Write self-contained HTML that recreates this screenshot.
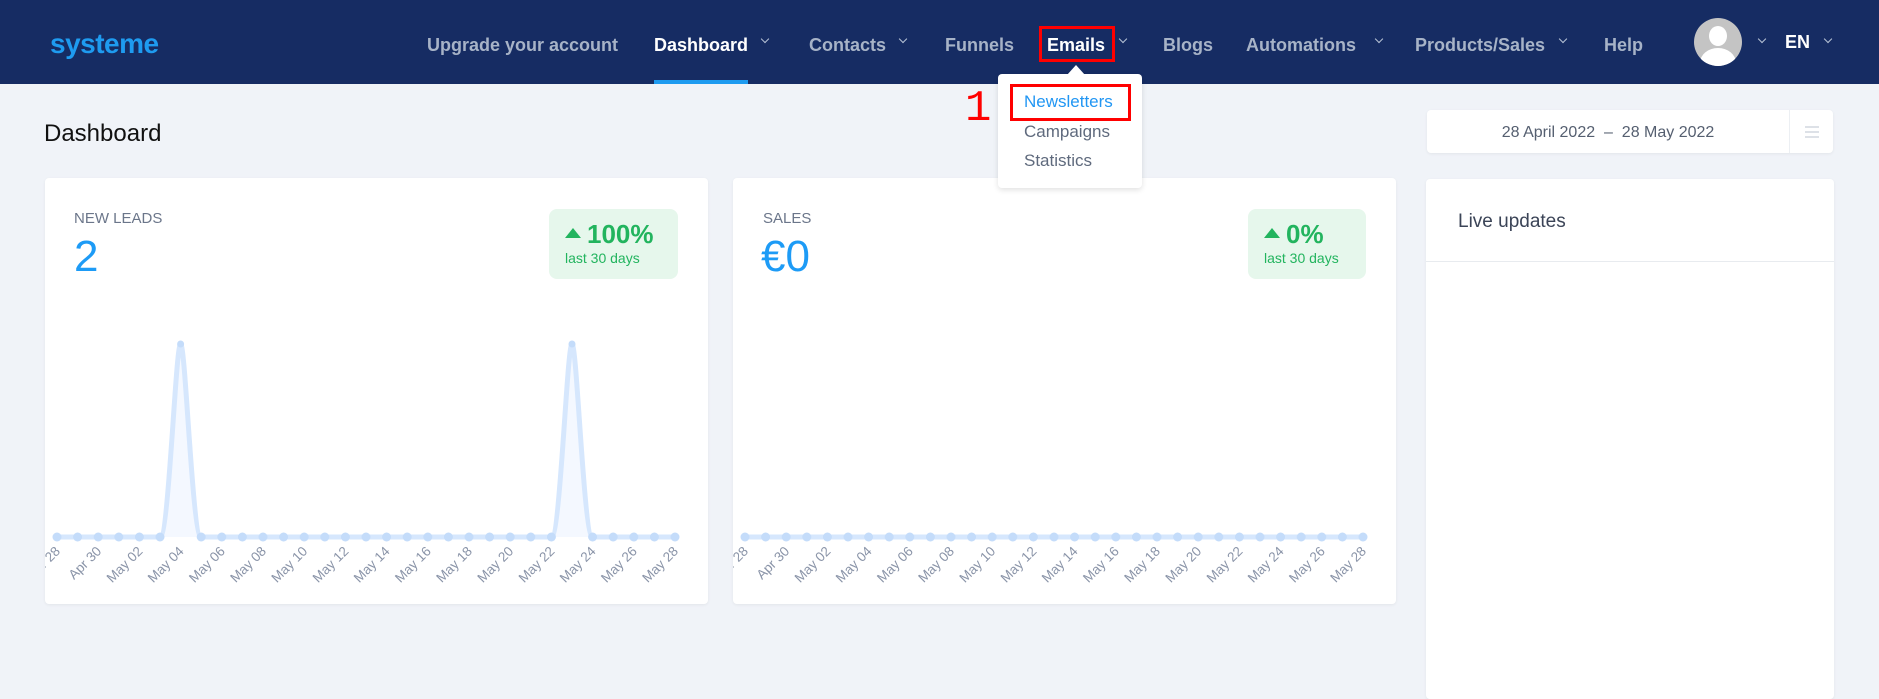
<!DOCTYPE html>
<html><head><meta charset="utf-8">
<style>
*{margin:0;padding:0;box-sizing:border-box}
body{width:1879px;height:680px;overflow:hidden;background:#f0f3f8;font-family:"Liberation Sans",sans-serif;position:relative}
.hdr{position:absolute;left:0;top:0;width:1879px;height:84px;background:#162c63}
.logo{position:absolute;left:50px;top:28px;color:#1e9bf0;font-weight:bold;font-size:28px;letter-spacing:-0.5px}
.nav{position:absolute;top:35px;font-size:18px;color:#a7b3c7;font-weight:bold;white-space:nowrap}
.chev{position:absolute;top:36px;width:6px;height:6px;border-right:1.6px solid #b8c3d6;border-bottom:1.6px solid #b8c3d6;transform:rotate(45deg)}
.card{position:absolute;background:#fff;border-radius:4px;box-shadow:0 1px 3px rgba(0,0,0,.06)}
.lbl{position:absolute;font-size:15px;color:#6b768a}
.big{position:absolute;font-size:44px;color:#1d9bf6}
.badge{position:absolute;background:#e6f7ec;border-radius:8px;color:#22b45e}
</style></head><body>
<div class="hdr"></div>
<div class="logo">systeme</div>
<div class="nav" style="left:427px">Upgrade your account</div>
<div class="nav" style="left:654px;color:#fff">Dashboard</div><div class="chev" style="left:762px"></div>
<div style="position:absolute;left:654px;top:80px;width:94px;height:4px;background:#1e9bf0"></div>
<div class="nav" style="left:809px">Contacts</div><div class="chev" style="left:900px"></div>
<div class="nav" style="left:945px">Funnels</div>
<div class="nav" style="left:1047px;color:#fff">Emails</div><div class="chev" style="left:1120px"></div>
<div style="position:absolute;left:1039px;top:26px;width:76px;height:36px;border:3px solid #f00"></div>
<div class="nav" style="left:1163px">Blogs</div>
<div class="nav" style="left:1246px">Automations</div><div class="chev" style="left:1376px"></div>
<div class="nav" style="left:1415px">Products/Sales</div><div class="chev" style="left:1560px"></div>
<div class="nav" style="left:1604px">Help</div>
<div style="position:absolute;left:1694px;top:18px;width:48px;height:48px;border-radius:50%;background:#c4c4c4;overflow:hidden">
<div style="position:absolute;left:15px;top:8px;width:18px;height:20px;border-radius:50%;background:#fff"></div>
<div style="position:absolute;left:6px;top:30px;width:36px;height:30px;border-radius:50% 50% 0 0;background:#fff"></div></div>
<div class="chev" style="left:1759px;top:36px"></div>
<div class="nav" style="left:1785px;color:#fff;top:32px">EN</div><div class="chev" style="left:1825px;top:36px"></div>

<div style="position:absolute;left:44px;top:120px;font-size:24px;color:#111">Dashboard</div>
<div style="position:absolute;left:965px;top:84px;font-size:44px;color:#f00;font-family:'Liberation Mono',monospace">1</div>

<div class="card" style="left:1427px;top:110px;width:406px;height:43px">
<div style="position:absolute;left:0;width:362px;top:14px;text-align:center;font-size:16px;color:#555f70">28 April 2022 &nbsp;–&nbsp; 28 May 2022</div>
<div style="position:absolute;left:362px;top:0;width:1px;height:43px;background:#eceff3"></div>
<div style="position:absolute;left:378px;top:16px;width:14px;height:2px;background:#dde1e7;box-shadow:0 5px 0 #dde1e7,0 10px 0 #dde1e7"></div>
</div>

<div class="card" style="left:45px;top:178px;width:663px;height:426px">
<div class="lbl" style="left:29px;top:32px">NEW LEADS</div>
<div class="big" style="left:29px;top:54px">2</div>
<div class="badge" style="left:504px;top:31px;width:129px;height:70px">
<div style="position:absolute;left:16px;top:19px;width:0;height:0;border-left:8px solid transparent;border-right:8px solid transparent;border-bottom:10px solid #22b45e"></div>
<div style="position:absolute;left:38px;top:10px;font-size:26px;font-weight:bold">100%</div>
<div style="position:absolute;left:16px;top:41px;font-size:14px">last 30 days</div></div>
<svg id="c1" width="663" height="426" style="position:absolute;left:0;top:0"></svg>
</div>

<div class="card" style="left:733px;top:178px;width:663px;height:426px">
<div class="lbl" style="left:30px;top:32px">SALES</div>
<div class="big" style="left:28px;top:54px">€0</div>
<div class="badge" style="left:515px;top:31px;width:118px;height:70px">
<div style="position:absolute;left:16px;top:19px;width:0;height:0;border-left:8px solid transparent;border-right:8px solid transparent;border-bottom:10px solid #22b45e"></div>
<div style="position:absolute;left:38px;top:10px;font-size:26px;font-weight:bold">0%</div>
<div style="position:absolute;left:16px;top:41px;font-size:14px">last 30 days</div></div>
<svg id="c2" width="663" height="426" style="position:absolute;left:0;top:0"></svg>
</div>

<div class="card" style="left:1426px;top:179px;width:408px;height:520px">
<div style="position:absolute;left:32px;top:32px;font-size:19px;color:#3b4457">Live updates</div>
<div style="position:absolute;left:0;top:82px;width:408px;height:1px;background:#e8ebef"></div>
</div>

<div style="position:absolute;left:998px;top:74px;width:144px;height:114px;background:#fff;border-radius:4px;box-shadow:0 2px 6px rgba(0,0,0,.12)"></div>
<div style="position:absolute;left:1067px;top:65px;width:0;height:0;border-left:9px solid transparent;border-right:9px solid transparent;border-bottom:10px solid #fff"></div>
<div style="position:absolute;left:1024px;top:92px;font-size:17px;color:#2196f3">Newsletters</div>
<div style="position:absolute;left:1010px;top:84px;width:121px;height:37px;border:3px solid #f00"></div>
<div style="position:absolute;left:1024px;top:122px;font-size:17px;color:#5f6a7d">Campaigns</div>
<div style="position:absolute;left:1024px;top:151px;font-size:17px;color:#5f6a7d">Statistics</div>

<script>
function chart(id,peaks){
 var s=document.getElementById(id),x0=12,dx=20.6,B=359,P=166,h='';
 var X=function(i){return x0+i*dx};
 var d='M'+X(0)+' '+B,f='';
 for(var i=1;i<31;i++){
  if(peaks.indexOf(i)>=0){d+=' C'+(X(i-1)+9)+' '+B+' '+(X(i)-5)+' '+P+' '+X(i)+' '+P;
   f+='<path d="M'+X(i-1)+' '+B+' C'+(X(i-1)+9)+' '+B+' '+(X(i)-5)+' '+P+' '+X(i)+' '+P+' C'+(X(i)+5)+' '+P+' '+(X(i+1)-9)+' '+B+' '+X(i+1)+' '+B+'Z" fill="#f4f8ff"/>';}
  else if(peaks.indexOf(i-1)>=0){d+=' C'+(X(i-1)+5)+' '+P+' '+(X(i)-9)+' '+B+' '+X(i)+' '+B;}
  else d+=' L'+X(i)+' '+B;
 }
 h+=f+'<path d="'+d+'" fill="none" stroke="#d6e7fd" stroke-width="5" stroke-linejoin="round"/>';
 for(var i=0;i<31;i++){if(peaks.indexOf(i)<0)h+='<circle cx="'+X(i)+'" cy="'+B+'" r="4.5" fill="#c4dcfa"/>';else h+='<circle cx="'+X(i)+'" cy="'+P+'" r="3.5" fill="#c4dcfa"/>';}
 var labs=['Apr 28','Apr 30','May 02','May 04','May 06','May 08','May 10','May 12','May 14','May 16','May 18','May 20','May 22','May 24','May 26','May 28'];
 for(var k=0;k<16;k++){var x=X(k*2)+4,y=374;h+='<text x="'+x+'" y="'+y+'" font-size="13.5" fill="#8a94a8" text-anchor="end" transform="rotate(-45 '+x+' '+y+')" font-family="Liberation Sans,sans-serif">'+labs[k]+'</text>';}
 s.innerHTML='<defs><clipPath id="cp'+id+'"><rect x="0" y="0" width="663" height="426"/></clipPath></defs><g clip-path="url(#cp'+id+')">'+h+'</g>';
}
chart('c1',[6,25]);chart('c2',[]);
</script>
</body></html>
